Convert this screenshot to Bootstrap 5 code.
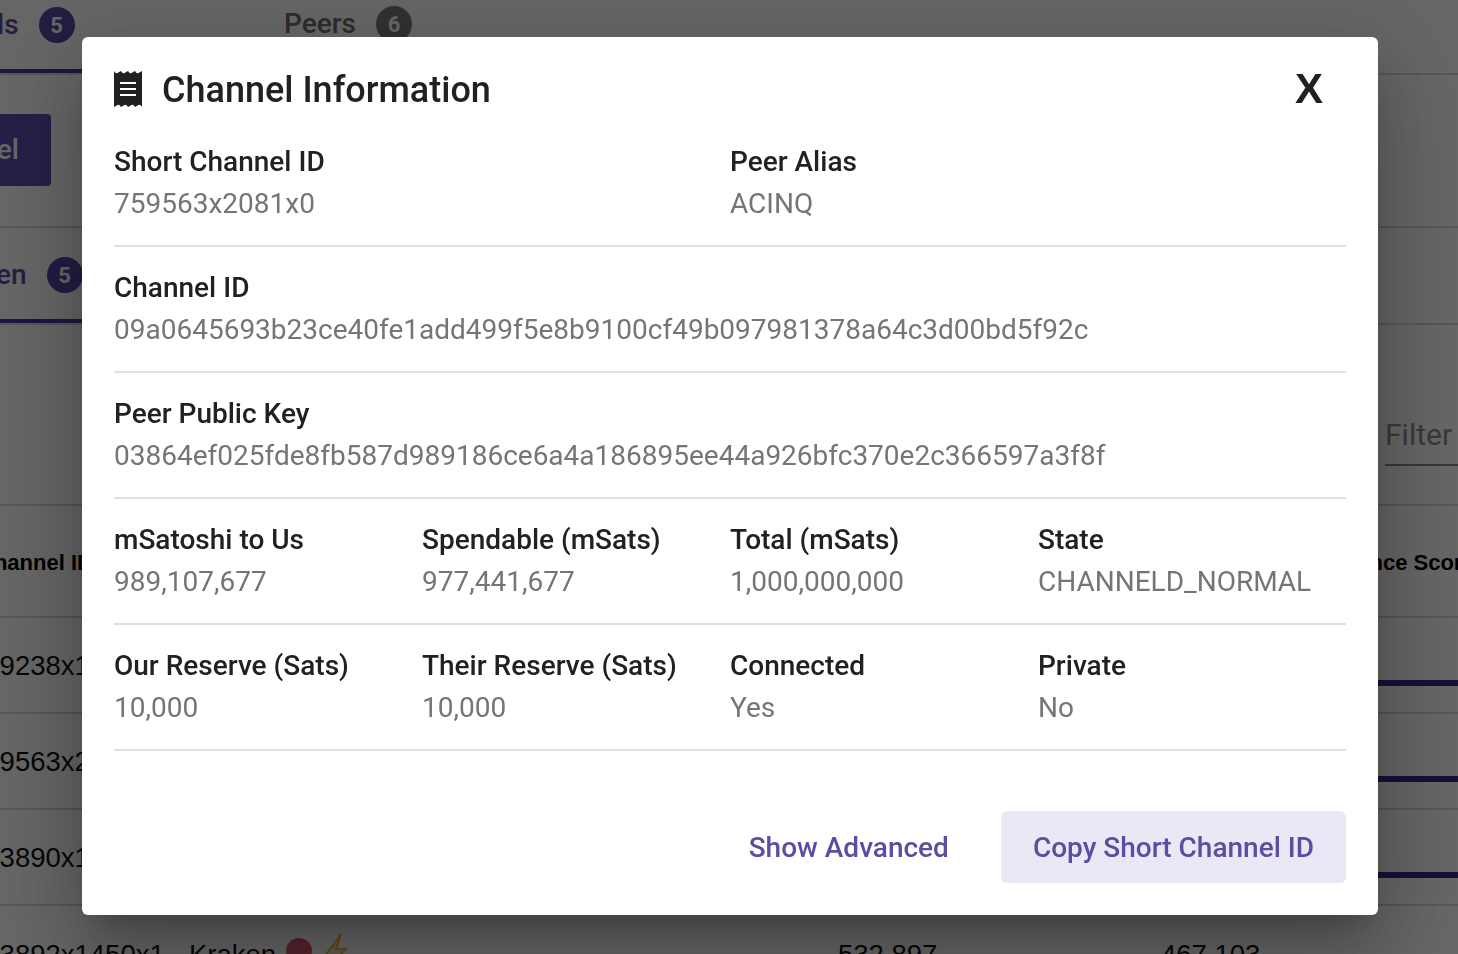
<!DOCTYPE html>
<html lang="en">
<head>
<meta charset="utf-8">
<title>Channel Information</title>
<link href="https://cdn.jsdelivr.net/npm/bootstrap@5.3.0/dist/css/bootstrap.min.css" rel="stylesheet">
<style>
html,body{height:954px;overflow:hidden;background:#fff;}
body{font-family:Roboto,"Liberation Sans",sans-serif;color:#000;}
.pg-wrap{margin-left:-140px;width:1598px;height:954px;overflow:hidden;}
.pg-line{border-bottom:2px solid #d8d8d8;}
.tab-row{height:75px;}
.tab-one{width:300px;height:73px;padding-left:42px;padding-top:4px;border-bottom:4px solid #4438a8;color:#5a4ea2;font-weight:500;font-size:28px;}
.tab-two{margin-left:124px;color:#6e6e6e;font-weight:500;font-size:28px;height:48px;}
.cnt{display:inline-flex;width:36px;height:36px;border-radius:50%;align-items:center;justify-content:center;font-size:22px;font-weight:700;color:#fff;}
.cnt-p{background:#5248a8;margin-left:20px;}
.cnt-g{background:#7a7a7a;margin-left:20px;}
.btn-row{height:153px;padding-top:39px;}
.open-btn{width:191px;height:72px;background:#5a4eb0;color:#fff;font-size:28px;font-weight:500;border-radius:4px;padding-right:32px;white-space:nowrap;}
.sub-row{height:97px;}
.sub-tab{width:300px;height:95px;padding-left:101px;border-bottom:4px solid #4438a8;color:#5a4ea2;font-weight:500;font-size:28px;padding-top:26px;}
.filter-row{height:181px;padding-top:89px;}
.filter-box{width:73px;height:52px;border-bottom:2px solid #888;color:#8c8c8c;font-size:30px;line-height:42px;white-space:nowrap;}
.head-row{height:112px;font-family:"Liberation Sans",Arial,sans-serif;font-weight:700;font-size:22px;white-space:nowrap;padding-top:2px;}
.head-one{padding-left:118px;}
.head-two{margin-left:auto;width:135px;}
.data-row{height:96px;font-family:"Liberation Sans",Arial,sans-serif;font-size:27.5px;white-space:nowrap;color:#111;padding-top:2px;}
.c-id{width:329px;padding-left:109px;}
.c-al{width:649px;gap:10px;}
.c-a{width:323px;}
.c-b{width:297px;}
.prog{width:85px;height:6px;background:#322890;}
.c-bar{margin-left:auto;width:85px;padding-top:60px;align-self:flex-start;}
.emo{margin-top:-6px;}

.shade{position:fixed;inset:0;background:rgba(0,0,0,.6);z-index:1040;}
.modal.info-modal{z-index:1050;overflow:hidden;}
.info-modal .modal-dialog{max-width:1296px;width:1296px;margin:37px 0 0 82px;}
.info-modal .modal-content{border:0;border-radius:6px;height:878px;padding:32px;box-shadow:0 22px 30px -14px rgba(0,0,0,.22),0 48px 76px 6px rgba(0,0,0,.16),0 18px 92px 16px rgba(0,0,0,.14);}
.info-modal .modal-header{border:0;padding:0;height:40px;margin-bottom:32px;color:#212121;}
.ttl{font-size:36px;font-weight:500;line-height:40px;margin:2px 0 0;color:#212121;}
.ttl-ico{width:28px;height:36px;margin-right:20px;display:block;}
.cls{font-family:"Liberation Sans",Arial,sans-serif;font-size:42px;font-weight:700;line-height:40px;color:#212121;margin-right:23px;background:none;border:0;padding:0;}
.info-modal .modal-body{padding:0;flex:none;}
.info-row{height:106px;margin-bottom:20px;border-bottom:2px solid #e0e0e0;}
.lbl{font-size:28px;font-weight:500;line-height:42px;color:#212121;white-space:nowrap;}
.val{font-size:28px;font-weight:400;line-height:42px;color:#757575;white-space:nowrap;}
.info-modal .modal-footer{border:0;padding:0;margin-top:40px;gap:20px;}
.act{font-size:28px;font-weight:500;color:#5a4ea2;height:72px;padding:2px 32px 0;border:0;border-radius:6px;background:transparent;margin:0;line-height:70px;}
.act-soft{background:#eae8f4;}
</style>
</head>
<body>
<div class="pg-wrap">
  <div class="tab-row pg-line d-flex align-items-start">
    <div class="tab-one d-flex align-items-start"><span class="d-flex align-items-center">Channels<span class="cnt cnt-p">5</span></span></div>
    <div class="tab-two d-flex align-items-center">Peers<span class="cnt cnt-g">6</span></div>
  </div>
  <div class="btn-row pg-line">
    <div class="open-btn d-flex justify-content-end align-items-center">Open Channel</div>
  </div>
  <div class="sub-row pg-line d-flex">
    <div class="sub-tab"><span class="d-flex align-items-center">Open<span class="cnt cnt-p">5</span></span></div>
  </div>
  <div class="filter-row pg-line d-flex justify-content-end">
    <div class="filter-box">Filter</div>
  </div>
  <div class="head-row pg-line d-flex align-items-center">
    <div class="head-one">Channel ID</div>
    <div class="head-two">Balance Score</div>
  </div>
  <div class="data-row pg-line d-flex align-items-center">
    <div class="c-id">759238x1450x1</div><div class="c-bar"><div class="prog"></div></div>
  </div>
  <div class="data-row pg-line d-flex align-items-center">
    <div class="c-id">759563x2081x0</div><div class="c-bar"><div class="prog"></div></div>
  </div>
  <div class="data-row pg-line d-flex align-items-center">
    <div class="c-id">743890x1450x1</div><div class="c-bar"><div class="prog"></div></div>
  </div>
  <div class="data-row d-flex align-items-center">
    <div class="c-id">743892x1450x1</div>
    <div class="c-al d-flex align-items-center">Kraken
      <svg class="emo" width="26" height="28" viewBox="0 0 26 28" aria-hidden="true"><circle cx="13" cy="13" r="13" fill="#d9566e"/><circle cx="9" cy="19" r="1.5" fill="#300"/><circle cx="17" cy="19" r="1.5" fill="#300"/></svg>
      <svg class="emo" width="26" height="40" viewBox="0 0 26 40" aria-hidden="true"><path d="M19 2 3 24h9l-7 14 19-21H14z" fill="#e0a030" fill-opacity=".25" stroke="#f7b32b" stroke-width="2"/></svg>
    </div>
    <div class="c-a">532,897</div>
    <div class="c-b">467,103</div>
  </div>
</div>

<div class="shade"></div>

<div class="modal info-modal d-block" tabindex="-1" role="dialog" aria-labelledby="infoTtl">
  <div class="modal-dialog">
    <div class="modal-content">
      <div class="modal-header d-flex align-items-center">
        <svg class="ttl-ico" viewBox="0 0 28 36" aria-hidden="true">
          <path fill="#212121" fill-rule="evenodd" d="M0 0Q1.75 3 3.5 2Q5 1 7 0Q8.75 3 10.5 2Q12.2 1 14 0Q15.75 3 17.5 2Q19.2 1 21 0Q22.75 3 24.5 2Q26.2 1 28 0V36Q26.25 33 24.5 34Q22.8 35 21 36Q19.25 33 17.5 34Q15.8 35 14 36Q12.25 33 10.5 34Q8.8 35 7 36Q5.25 33 3.5 34Q1.8 35 0 36ZM6 11v2h16v-2ZM6 17v2h16v-2ZM6 23v2h16v-2Z"/>
        </svg>
        <h5 class="ttl" id="infoTtl">Channel Information</h5>
        <button type="button" class="cls ms-auto" aria-label="Close">X</button>
      </div>
      <div class="modal-body">
        <div class="row g-0 info-row">
          <div class="col-6"><div class="lbl">Short Channel ID</div><div class="val">759563x2081x0</div></div>
          <div class="col-6"><div class="lbl">Peer Alias</div><div class="val">ACINQ</div></div>
        </div>
        <div class="row g-0 info-row">
          <div class="col-12"><div class="lbl">Channel ID</div><div class="val">09a0645693b23ce40fe1add499f5e8b9100cf49b097981378a64c3d00bd5f92c</div></div>
        </div>
        <div class="row g-0 info-row">
          <div class="col-12"><div class="lbl">Peer Public Key</div><div class="val">03864ef025fde8fb587d989186ce6a4a186895ee44a926bfc370e2c366597a3f8f</div></div>
        </div>
        <div class="row g-0 info-row">
          <div class="col-3"><div class="lbl">mSatoshi to Us</div><div class="val">989,107,677</div></div>
          <div class="col-3"><div class="lbl">Spendable (mSats)</div><div class="val">977,441,677</div></div>
          <div class="col-3"><div class="lbl">Total (mSats)</div><div class="val">1,000,000,000</div></div>
          <div class="col-3"><div class="lbl">State</div><div class="val">CHANNELD_NORMAL</div></div>
        </div>
        <div class="row g-0 info-row">
          <div class="col-3"><div class="lbl">Our Reserve (Sats)</div><div class="val">10,000</div></div>
          <div class="col-3"><div class="lbl">Their Reserve (Sats)</div><div class="val">10,000</div></div>
          <div class="col-3"><div class="lbl">Connected</div><div class="val">Yes</div></div>
          <div class="col-3"><div class="lbl">Private</div><div class="val">No</div></div>
        </div>
      </div>
      <div class="modal-footer">
        <button type="button" class="btn act">Show Advanced</button>
        <button type="button" class="btn act act-soft">Copy Short Channel ID</button>
      </div>
    </div>
  </div>
</div>
<script src="https://cdn.jsdelivr.net/npm/bootstrap@5.3.0/dist/js/bootstrap.bundle.min.js"></script>
</body>
</html>
